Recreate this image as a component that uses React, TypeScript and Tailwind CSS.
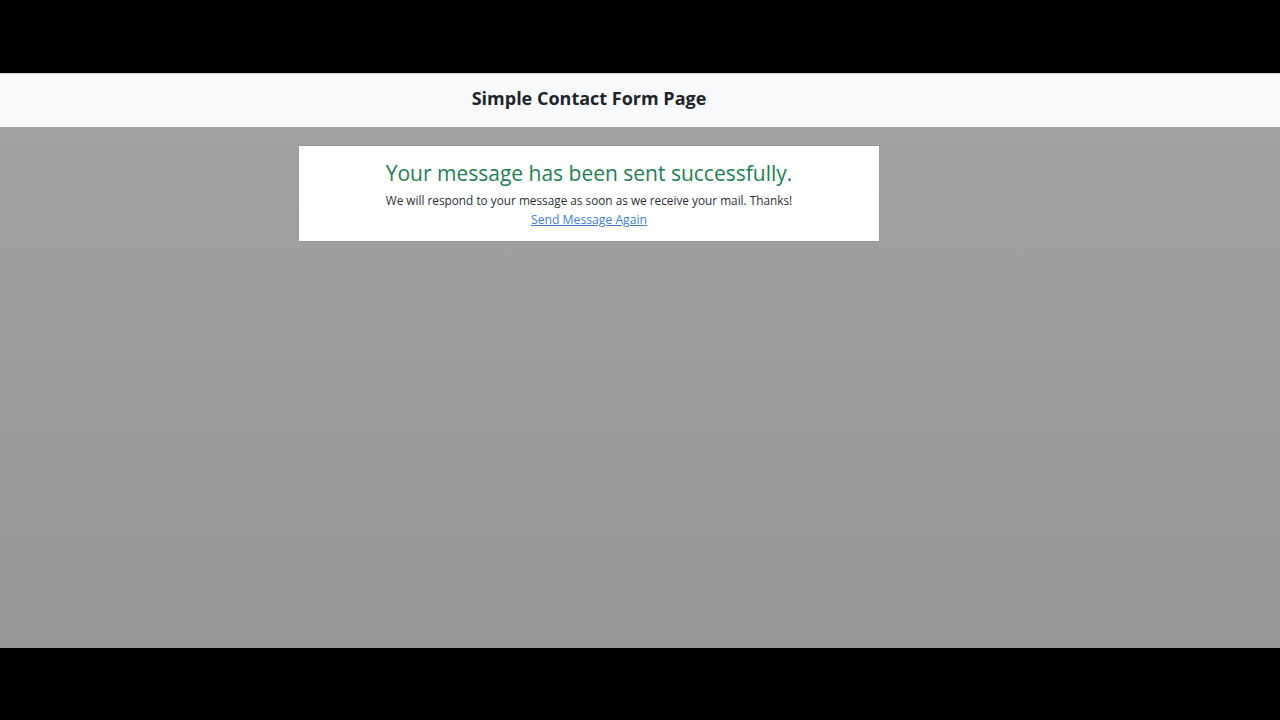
export default function App() {
  return (
    <div className="flex h-[720px] w-[1280px] flex-col bg-black font-['Open_Sans',sans-serif]">
      {/* letterbox top */}
      <div className="h-[73px] shrink-0 bg-black" />

      {/* Navbar */}
      <nav className="flex h-[54px] shrink-0 items-center border-t border-[#d8d9dc] bg-[#f8f9fa] pb-[4px]">
        <div className="ml-[299px] w-[580px] text-center text-[18px] font-bold text-[#212529]">
          Simple Contact Form Page
        </div>
      </nav>

      {/* Body */}
      <main className="flex-1 bg-gradient-to-b from-[#a0a1a3] to-[#959698] pt-[19px]">
        <div className="ml-[299px] flex w-[580px] flex-col items-center bg-white pb-[12px] pt-[14px] shadow-[0_0_1px_rgba(0,0,0,0.25)]">
          <h2 className="text-[21px] leading-[26px] font-medium text-[#1e8050]">
            Your message has been sent successfully.
          </h2>
          <p className="mt-[5px] text-[11.8px] leading-[19px] text-[#2b2f33]">
            We will respond to your message as soon as we receive your mail. Thanks!
          </p>
          <a href="#" className="text-[12.2px] leading-[19px] text-[#3d7fd4] underline">
            Send Message Again
          </a>
        </div>
      </main>

      {/* letterbox bottom */}
      <div className="h-[72px] shrink-0 bg-black" />
    </div>
  );
}
